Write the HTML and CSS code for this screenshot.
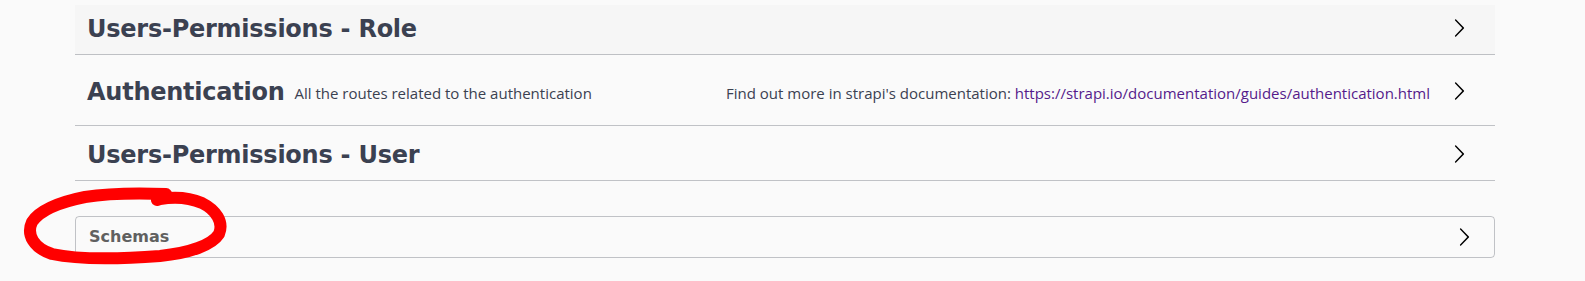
FILE: index.html
```html
<!DOCTYPE html>
<html lang="en">
<head>
<meta charset="utf-8">
<title>Swagger UI</title>
<link rel="stylesheet" href="styles.css">
</head>
<body>
<svg class="sprite" width="0" height="0" aria-hidden="true">
  <defs>
    <symbol id="large-arrow" viewBox="0 0 20 20">
      <path d="M13.25 10L6.109 2.58a.697.697 0 010-.979.68.68 0 01.969 0l7.83 7.908a.697.697 0 010 .979l-7.83 7.908a.68.68 0 01-.969 0 .697.697 0 010-.979L13.25 10z"/>
    </symbol>
  </defs>
</svg>
<div class="wrapper">
  <div class="tag-section">
    <h3 class="opblock-tag is-hover">
      <a class="tag-name">Users-Permissions - Role</a>
      <small class="tag-desc"></small>
      <button class="expand-operation"><svg class="arrow" width="20" height="20"><use href="#large-arrow"/></svg></button>
    </h3>
  </div>
  <div class="tag-section">
    <h3 class="opblock-tag with-docs">
      <a class="tag-name">Authentication</a>
      <small class="tag-desc">All the routes related to the authentication</small>
      <div class="externaldocs">
        <small>Find out more in strapi's documentation: <a class="doc-link" href="#">https://strapi.io/documentation/guides/authentication.html</a></small>
      </div>
      <button class="expand-operation"><svg class="arrow" width="20" height="20"><use href="#large-arrow"/></svg></button>
    </h3>
  </div>
  <div class="tag-section">
    <h3 class="opblock-tag">
      <a class="tag-name">Users-Permissions - User</a>
      <small class="tag-desc"></small>
      <button class="expand-operation"><svg class="arrow" width="20" height="20"><use href="#large-arrow"/></svg></button>
    </h3>
  </div>
  <section class="models">
    <h4 class="models-title">
      <span class="models-name">Schemas</span>
      <svg class="arrow" width="20" height="20"><use href="#large-arrow"/></svg>
    </h4>
  </section>
</div>
<svg class="annotation" width="1585" height="281" viewBox="0 0 1585 281" aria-hidden="true">
  <path d="M166 194 C140 193 110 193 85 197 C60 202 40 210 32 222 C26 235 34 248 52 254 C80 260 120 259 160 256 C190 253 212 245 219 234 C224 222 216 210 202 203 C188 197 172 197 160 199 L157 200"/>
</svg>
</body>
</html>
```

FILE: styles.css
```css
html, body {
  margin: 0;
  padding: 0;
  background: #fafafa;
}

body {
  font-family: "DejaVu Sans", sans-serif;
  color: #3b4151;
}

.sprite {
  position: absolute;
  width: 0;
  height: 0;
  overflow: hidden;
}

.wrapper {
  width: 1420px;
  margin-left: 75px;
  padding-top: 5px;
}

.opblock-tag {
  display: flex;
  align-items: center;
  margin: 0 0 5px;
  padding: 10px 20px 10px 12px;
  border-bottom: 1px solid rgba(59, 65, 81, 0.3);
  font-family: "DejaVu Sans", sans-serif;
  font-size: 24px;
  font-weight: 700;
  line-height: 29px;
  color: #3b4151;
}

.opblock-tag.is-hover {
  background: #f6f6f6;
}

.opblock-tag.with-docs {
  padding-top: 18px;
  padding-bottom: 18px;
}

.tag-name {
  color: inherit;
  text-decoration: none;
  white-space: nowrap;
  letter-spacing: -0.25px;
}

.tag-desc {
  flex: 2;
  padding: 0 10px;
  font-family: "Open Sans", sans-serif;
  font-size: 15px;
  font-weight: 400;
  line-height: 20px;
  color: #3b4151;
}

.externaldocs small {
  display: block;
  padding: 0 13px 0 10px;
  font-family: "Open Sans", sans-serif;
  font-size: 15px;
  font-weight: 400;
  line-height: 20px;
  color: #3b4151;
  white-space: nowrap;
}

.doc-link {
  color: #551a8b;
  text-decoration: none;
}

.expand-operation {
  display: flex;
  align-items: center;
  border: none;
  background: none;
  padding: 0 6px;
  margin-top: -3px;
  cursor: pointer;
}

.arrow {
  display: block;
  fill: #000;
}

.models {
  margin: 35px 0 30px;
  border: 1px solid rgba(59, 65, 81, 0.3);
  border-radius: 4px;
}

.models-title {
  display: flex;
  align-items: center;
  margin: 0;
  padding: 10px 20px 10px 13px;
  font-family: "DejaVu Sans", sans-serif;
  font-size: 16px;
  font-weight: 700;
  line-height: 20px;
  color: #606060;
}

.models-name {
  flex: 1;
}

.annotation {
  position: absolute;
  left: 0;
  top: 0;
  pointer-events: none;
}

.annotation path {
  fill: none;
  stroke: #ff0000;
  stroke-width: 12;
  stroke-linecap: round;
  stroke-linejoin: round;
}
```
